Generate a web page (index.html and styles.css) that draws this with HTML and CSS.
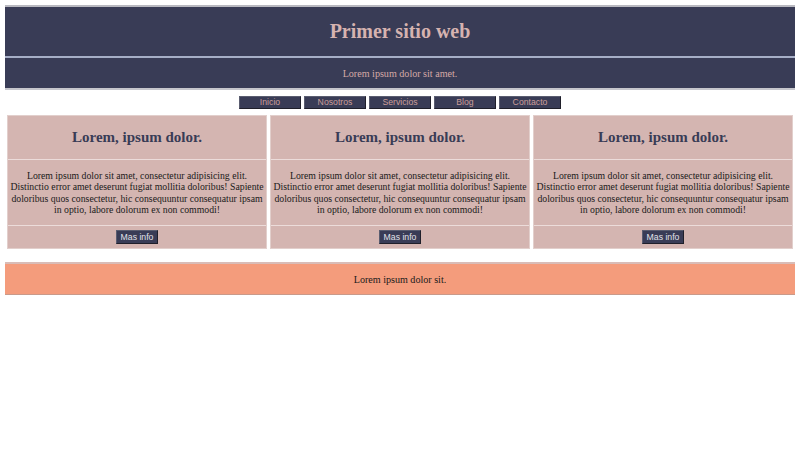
FILE: index.html
```html
<!DOCTYPE html>
<html lang="es">
<head>
<meta charset="utf-8">
<title>Primer sitio web</title>
<link rel="stylesheet" href="styles.css">
</head>
<body>
<div class="page">
  <header class="site-header">
    <div class="title-row"><h1 class="title">Primer sitio web</h1></div>
    <div class="subtitle-row"><p class="subtitle">Lorem ipsum dolor sit amet.</p></div>
  </header>
  <nav class="nav">
    <a class="nav-btn" href="#">Inicio</a>
    <a class="nav-btn" href="#">Nosotros</a>
    <a class="nav-btn" href="#">Servicios</a>
    <a class="nav-btn" href="#">Blog</a>
    <a class="nav-btn" href="#">Contacto</a>
  </nav>
  <main class="cards">
    <section class="card">
      <div class="card-head"><h2 class="card-title">Lorem, ipsum dolor.</h2></div>
      <div class="card-body"><p class="card-text">Lorem ipsum dolor sit amet, consectetur adipisicing elit. Distinctio error amet deserunt fugiat mollitia doloribus! Sapiente doloribus quos consectetur, hic consequuntur consequatur ipsam in optio, labore dolorum ex non commodi!</p></div>
      <div class="card-foot"><button class="more-btn">Mas info</button></div>
    </section>
    <section class="card">
      <div class="card-head"><h2 class="card-title">Lorem, ipsum dolor.</h2></div>
      <div class="card-body"><p class="card-text">Lorem ipsum dolor sit amet, consectetur adipisicing elit. Distinctio error amet deserunt fugiat mollitia doloribus! Sapiente doloribus quos consectetur, hic consequuntur consequatur ipsam in optio, labore dolorum ex non commodi!</p></div>
      <div class="card-foot"><button class="more-btn">Mas info</button></div>
    </section>
    <section class="card">
      <div class="card-head"><h2 class="card-title">Lorem, ipsum dolor.</h2></div>
      <div class="card-body"><p class="card-text">Lorem ipsum dolor sit amet, consectetur adipisicing elit. Distinctio error amet deserunt fugiat mollitia doloribus! Sapiente doloribus quos consectetur, hic consequuntur consequatur ipsam in optio, labore dolorum ex non commodi!</p></div>
      <div class="card-foot"><button class="more-btn">Mas info</button></div>
    </section>
  </main>
  <footer class="site-footer">
    <p class="footer-text">Lorem ipsum dolor sit.</p>
  </footer>
</div>
</body>
</html>
```

FILE: styles.css
```css
html, body {
  margin: 0;
  padding: 0;
  background: #ffffff;
}

body {
  font-family: "Liberation Serif", "Times New Roman", serif;
}

.page {
  padding: 5px 5px;
}

.site-header {
  background: #393c56;
  border-top: 2px solid #b9b9c0;
  border-bottom: 2px solid #c6c6cc;
}

.title-row {
  height: 49px;
  display: flex;
  align-items: center;
  justify-content: center;
  border-bottom: 2px solid #a6aec6;
}

.title {
  margin: 0;
  font-size: 20px;
  font-weight: bold;
  color: #d6b3b0;
}

.subtitle-row {
  height: 30px;
  display: flex;
  align-items: center;
  justify-content: center;
}

.subtitle {
  margin: 0;
  font-size: 10.1px;
  color: #d6aaa6;
}

.nav {
  display: flex;
  justify-content: center;
  gap: 3px;
  margin: 6px 0 6px;
}

.nav-btn {
  box-sizing: border-box;
  width: 62px;
  height: 13px;
  background: #393c56;
  border: 1px solid #1f1f2a;
  border-top-color: #5a5d70;
  border-left-color: #5a5d70;
  color: #cc9e9a;
  font-family: "Liberation Sans", Arial, sans-serif;
  font-size: 8.7px;
  line-height: 11px;
  text-align: center;
  text-decoration: none;
}

.cards {
  display: grid;
  grid-template-columns: repeat(3, 1fr);
  gap: 3px;
  padding: 0 2px;
}

.card {
  background: #d4b5b1;
  border: 1px solid #e2cfcc;
  display: flex;
  flex-direction: column;
  min-width: 0;
}

.card-head {
  height: 43px;
  display: flex;
  align-items: center;
  justify-content: center;
  border-bottom: 1px solid #ecdcda;
}

.card-title {
  margin: 0;
  font-size: 15px;
  font-weight: bold;
  color: #393c56;
}

.card-body {
  height: 65px;
  display: flex;
  align-items: center;
  justify-content: center;
  border-bottom: 1px solid #ecdcda;
}

.card-text {
  margin: 0 -1px;
  font-size: 9.75px;
  line-height: 11.3px;
  color: #1a1a1a;
  text-align: center;
}

.card-foot {
  height: 22px;
  display: flex;
  align-items: center;
  justify-content: center;
}

.more-btn {
  box-sizing: border-box;
  height: 14px;
  padding: 0 4px;
  background: #393c56;
  border: 1px solid #1f1f2a;
  border-top-color: #5a5d70;
  border-left-color: #5a5d70;
  color: #e2e2ea;
  font-family: "Liberation Sans", Arial, sans-serif;
  font-size: 8.7px;
  line-height: 12px;
}

.site-footer {
  margin-top: 13px;
  background: #f49c7c;
  border-top: 2px solid #d9bcb7;
  border-bottom: 1px solid #c99a8a;
  height: 30px;
  display: flex;
  align-items: center;
  justify-content: center;
}

.footer-text {
  margin: 0;
  font-size: 10.1px;
  color: #1a1a1a;
}
```
